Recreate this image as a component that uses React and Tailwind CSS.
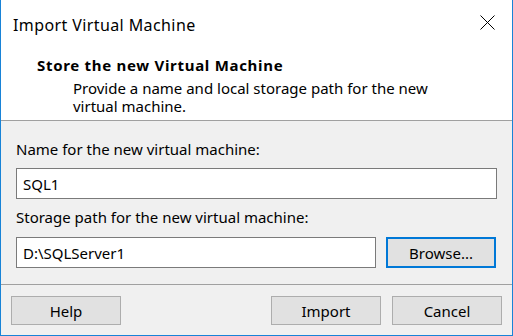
import React from "react";

export default function App() {
  return (
    <div
      className="w-[513px] h-[336px] bg-[#f0f0f0] border-x border-b border-[#1883d7] flex flex-col text-black text-[15px] font-['Noto_Sans',sans-serif] overflow-hidden"
    >
      {/* Header */}
      <div className="bg-white h-[121px] border-b border-[#a0a0a0] shrink-0 flex flex-col">
        <div className="flex items-start justify-between pl-[12px] pr-[16px] pt-[15px] h-[55px]">
          <span className="leading-[20px] text-[16px] tracking-[0.4px]">Import Virtual Machine</span>
          <svg width="15" height="15" viewBox="0 0 15 15" className="mr-[1px]">
            <path d="M0.5 0.5 L14.5 14.5 M14.5 0.5 L0.5 14.5" stroke="#000" strokeWidth="1" fill="none" />
          </svg>
        </div>
        <div className="pl-[36px] leading-[20px] font-bold tracking-[0.7px]">Store the new Virtual Machine</div>
        <div className="pl-[72px] mt-[4px] leading-[18px]">
          Provide a name and local storage path for the new
          <br />
          virtual machine.
        </div>
      </div>

      {/* Body */}
      <div className="h-[163px] shrink-0 px-[15px] pt-[18px] flex flex-col">
        <div className="leading-[20px]">Name for the new virtual machine:</div>
        <div className="mt-[9px] h-[31px] w-[481px] bg-white border border-[#7a7a7a] flex items-center pl-[6px] leading-[20px]">
          SQL1
        </div>
        <div className="mt-[8px] leading-[20px]">Storage path for the new virtual machine:</div>
        <div className="mt-[10px] flex gap-[10px]">
          <div className="h-[31px] w-[360px] bg-white border border-[#7a7a7a] flex items-center pl-[6px] leading-[20px]">
            D:\SQLServer1
          </div>
          <div className="h-[31px] w-[110px] bg-[#e1e1e1] border-2 border-[#0078d7] flex items-center justify-center leading-[20px]">
            Browse...
          </div>
        </div>
      </div>

      {/* Footer */}
      <div className="h-[51px] shrink-0 border-t border-[#a0a0a0] pt-[11px] pl-[10px] pr-[10px] flex">
        <div className="h-[29px] w-[110px] bg-[#e1e1e1] border border-[#adadad] flex items-center justify-center leading-[20px]">
          Help
        </div>
        <div className="flex-1" />
        <div className="h-[29px] w-[110px] bg-[#e1e1e1] border border-[#adadad] flex items-center justify-center leading-[20px]">
          Import
        </div>
        <div className="h-[29px] w-[110px] ml-[11px] bg-[#e1e1e1] border border-[#adadad] flex items-center justify-center leading-[20px]">
          Cancel
        </div>
      </div>
    </div>
  );
}
